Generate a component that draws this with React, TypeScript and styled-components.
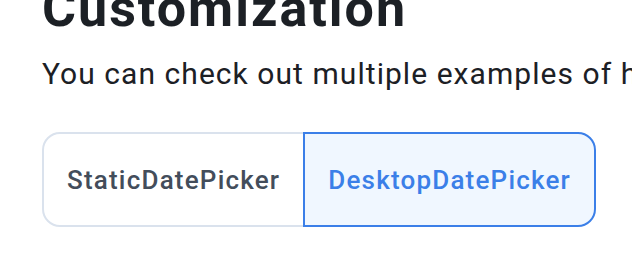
import React, { useState } from 'react';
import styled, { createGlobalStyle } from 'styled-components';

const GlobalStyle = createGlobalStyle`
  html, body {
    margin: 0;
    padding: 0;
    background: #ffffff;
  }
  body {
    font-family: Roboto, "Liberation Sans", sans-serif;
    -webkit-font-smoothing: antialiased;
  }
`;

const options = ['StaticDatePicker', 'DesktopDatePicker'];

const Page = styled.div`
  padding: 0 0 0 42px;
  overflow: hidden;
  width: 632px;
  box-sizing: border-box;
`;

const Heading = styled.h2`
  margin: -17px 0 0;
  font-size: 52px;
  line-height: 52px;
  font-weight: 700;
  color: #1c2025;
  letter-spacing: 2px;
`;

const Lead = styled.p`
  margin: 24px 0 0;
  font-size: 30px;
  line-height: 30px;
  font-weight: 400;
  color: #1c2025;
  letter-spacing: 1.05px;
  white-space: nowrap;
`;

const Group = styled.div`
  display: inline-flex;
  margin-top: 43px;
`;

const ToggleButton = styled.button<{ $selected: boolean }>`
  position: relative;
  height: 95px;
  padding: 0 23px;
  border: 2px solid ${(p) => (p.$selected ? '#3b7fe8' : '#dae2ed')};
  z-index: ${(p) => (p.$selected ? 1 : 0)};
  font-family: inherit;
  font-size: 26px;
  font-weight: 500;
  letter-spacing: 1.2px;
  color: ${(p) => (p.$selected ? '#3b7fe8' : '#434d5b')};
  background: ${(p) => (p.$selected ? '#f0f7ff' : '#ffffff')};
  cursor: pointer;
  &:first-child {
    border-radius: 18px 0 0 18px;
  }
  &:last-child {
    margin-left: -2px;
    border-radius: 0 18px 18px 0;
  }
`;

export default function App() {
  const [value, setValue] = useState('DesktopDatePicker');

  return (
    <>
      <GlobalStyle />
      <Page>
        <Heading>Customization</Heading>
        <Lead>You can check out multiple examples of how to customize</Lead>
        <Group>
          {options.map((o) => (
            <ToggleButton key={o} $selected={o === value} onClick={() => setValue(o)}>
              {o}
            </ToggleButton>
          ))}
        </Group>
      </Page>
    </>
  );
}
